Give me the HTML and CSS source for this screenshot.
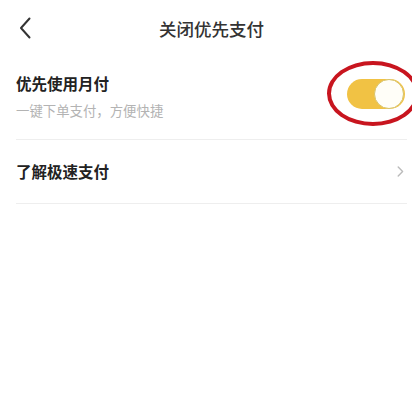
FILE: index.html
```html
<!DOCTYPE html>
<html lang="zh-CN">
<head>
    <meta charset="UTF-8">
    <meta name="viewport" content="width=device-width, initial-scale=1.0">
    <title>关闭优先支付</title>
    <link rel="stylesheet" href="styles.css">
</head>
<body>
    <div class="page">
        <!-- Header -->
        <header class="topbar">
            <span class="back">
                <svg width="12" height="22" viewBox="0 0 12 22">
                    <path d="M10.5 1.5 L2 11 L10.5 20.5" fill="none" stroke="#333" stroke-width="2" stroke-linecap="round" stroke-linejoin="round"/>
                </svg>
            </span>
            <h1 class="title">关闭优先支付</h1>
        </header>

        <!-- Settings -->
        <section class="list">
            <div class="item item-switch">
                <div class="item-text">
                    <div class="item-title">优先使用月付</div>
                    <div class="item-desc">一键下单支付，方便快捷</div>
                </div>
                <div class="switch-wrap">
                    <span class="switch on"><span class="knob"></span></span>
                    <span class="circle-mark"></span>
                </div>
            </div>
            <div class="item item-link">
                <div class="item-title">了解极速支付</div>
                <svg class="arrow" width="7" height="11" viewBox="0 0 7 11">
                    <path d="M1.2 1 L5.6 5.5 L1.2 10" fill="none" stroke="#bbb" stroke-width="1.4" stroke-linecap="round" stroke-linejoin="round"/>
                </svg>
            </div>
        </section>
    </div>
</body>
</html>
```

FILE: styles.css
```css
/* Basic Styles */
body {
    margin: 0;
    padding: 0;
    background: #fff;
    font-family: "Noto Sans CJK SC", "Noto Sans", sans-serif;
    color: #222;
}

.page {
    width: 412px;
    overflow: hidden;
}

.topbar {
    position: relative;
    height: 58px;
    display: flex;
    align-items: center;
    justify-content: center;
    padding: 0 5px 0 16px;
}

.back {
    position: absolute;
    left: 19px;
    top: 17px;
    display: flex;
}

.title {
    margin: 0;
    font-size: 17.5px;
    font-weight: 500;
    color: #333;
    line-height: 24px;
}

.list {
    padding: 0 5px 0 16px;
}

.item {
    display: flex;
    align-items: center;
    justify-content: space-between;
    border-bottom: 1px solid #eeeeee;
}

.item-switch {
    padding: 14px 2px 20px 0;
}

.item-link {
    height: 63px;
    padding-right: 3px;
}

.item-title {
    font-size: 15.5px;
    font-weight: 700;
    line-height: 23px;
    color: #222;
}

.item-desc {
    margin-top: 6px;
    font-size: 13.4px;
    line-height: 18px;
    color: #b3b3b3;
}

.switch-wrap {
    position: relative;
    margin-bottom: 3px;
}

.switch {
    display: block;
    position: relative;
    width: 58px;
    height: 30px;
    border-radius: 15px;
    background: #f1c244;
}

.knob {
    position: absolute;
    right: 1px;
    top: 0;
    width: 28px;
    height: 28px;
    border-radius: 50%;
    background: #fffef8;
    border: 1px solid #d8c36a;
}

/* red hand-drawn annotation */
.circle-mark {
    position: absolute;
    left: -20px;
    top: -18px;
    width: 84px;
    height: 57px;
    border: 4px solid #c8151f;
    border-radius: 50%;
}
```
